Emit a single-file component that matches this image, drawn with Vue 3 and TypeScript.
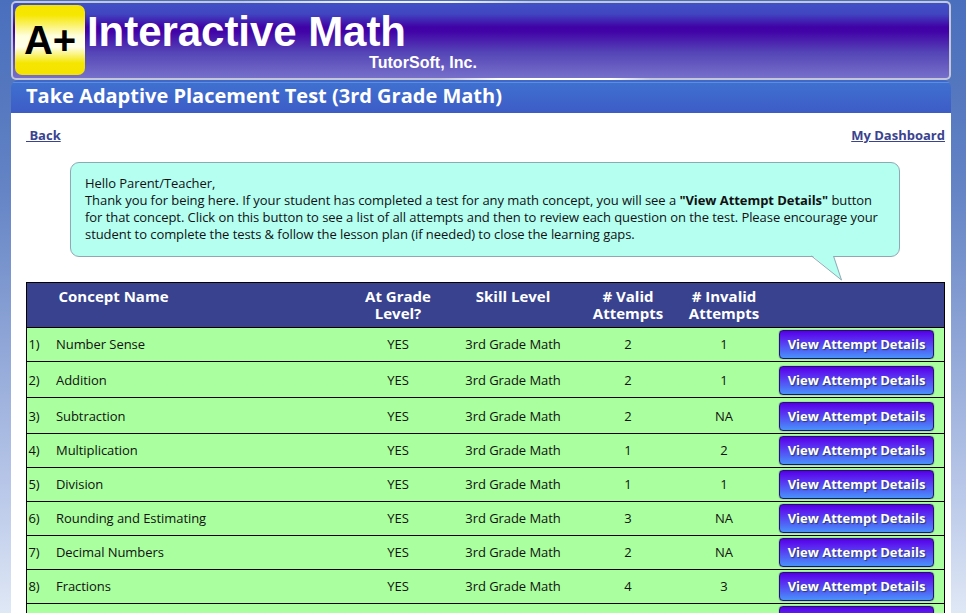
<script setup lang="ts">
interface Row {
  name: string
  valid: string
  invalid: string
  tall?: boolean
}

const rows: Row[] = [
  { name: 'Number Sense', valid: '2', invalid: '1' },
  { name: 'Addition', valid: '2', invalid: '1', tall: true },
  { name: 'Subtraction', valid: '2', invalid: 'NA', tall: true },
  { name: 'Multiplication', valid: '1', invalid: '2' },
  { name: 'Division', valid: '1', invalid: '1' },
  { name: 'Rounding and Estimating', valid: '3', invalid: 'NA' },
  { name: 'Decimal Numbers', valid: '2', invalid: 'NA' },
  { name: 'Fractions', valid: '4', invalid: '3' },
]
</script>

<template>
  <div class="page">
    <div class="container">
      <header class="banner">
        <div class="logo">A+</div>
        <div class="brand">
          <div class="brand-name">Interactive Math</div>
          <div class="brand-sub">TutorSoft, Inc.</div>
        </div>
      </header>
      <h1 class="title">Take Adaptive Placement Test (3rd Grade Math)</h1>
      <main class="content">
        <nav class="links">
          <a href="#">&nbsp;Back</a>
          <a href="#">My Dashboard</a>
        </nav>
        <section class="bubble">
          Hello Parent/Teacher,<br />
          Thank you for being here. If your student has completed a test for any math concept, you will see a <b>"View Attempt Details"</b> button<br />
          for that concept. Click on this button to see a list of all attempts and then to review each question on the test. Please encourage your<br />
          student to complete the tests &amp; follow the lesson plan (if needed) to close the learning gaps.
          <svg class="tail" width="34" height="26" viewBox="0 0 34 26">
            <path d="M0.5 0 L30.5 25 L22.5 0 Z" fill="#b5fff1" />
            <path d="M0.5 1 L30.5 25 L22.5 1" fill="none" stroke="#8fa9b4" stroke-width="1" />
          </svg>
        </section>
        <div class="table">
          <div class="row head">
            <span></span>
            <span class="name">Concept Name</span>
            <span>At Grade Level?</span>
            <span>Skill Level</span>
            <span class="attempts"># Valid Attempts</span>
            <span class="attempts"># Invalid Attempts</span>
            <span></span>
          </div>
          <div v-for="(row, i) in rows" :key="row.name" class="row" :class="{ tall: row.tall }">
            <span class="num">{{ i + 1 }})</span>
            <span class="name">{{ row.name }}</span>
            <span>YES</span>
            <span>3rd Grade Math</span>
            <span>{{ row.valid }}</span>
            <span>{{ row.invalid }}</span>
            <button type="button">View Attempt Details</button>
          </div>
          <div class="row last">
            <button type="button"></button>
          </div>
        </div>
      </main>
    </div>
  </div>
</template>

<style>
body {
  margin: 0;
  overflow: hidden;
}
</style>

<style scoped>
.page {
  box-sizing: border-box;
  height: 613px;
  overflow: hidden;
  padding: 1px 0 0 11px;
  background: linear-gradient(#4a6fbd 0, #5578bf 100px, #6484c5 190px, #8ea5d6 340px, #bccaea 500px, #dfe8f5 613px);
  font-family: 'Open Sans', sans-serif;
  font-size: 13px;
  line-height: 17px;
  color: #111;
}
.container {
  width: 940px;
}
.banner {
  box-sizing: border-box;
  display: flex;
  height: 79px;
  border: 2px solid transparent;
  border-radius: 5px;
  padding: 2px;
  background:
    linear-gradient(#3f51c7 0, #4145c0 11px, #4002a6 24px, #4204a7 29px, #5444b6 49px, #7770ca 75px) padding-box,
    linear-gradient(90deg, #c3c7d8 230px, #f0f0fa 350px, #f0f0fa 440px, #c3c7d8 520px) top / 100% 2px no-repeat border-box,
    linear-gradient(90deg, #c3c7d8 430px, #fff 490px, #fff 600px, #c3c7d8 640px) border-box;
  font-family: 'Liberation Sans', sans-serif;
  font-weight: bold;
  color: #fff;
}
.logo {
  width: 70px;
  height: 70px;
  border-radius: 7px;
  background: linear-gradient(#f5e400 0, #f6e700 10px, #ffffdf 31px, #ffffeb 42px, #f5e600 58px, #f4e200 70px);
  color: #000;
  font-size: 40px;
  line-height: 71px;
  text-align: center;
}
.brand {
  display: flex;
  flex-direction: column;
  width: 392px;
}
.brand-name {
  padding: 3px 0 0 2px;
  font-size: 42px;
  line-height: 47px;
  letter-spacing: -0.05px;
  white-space: nowrap;
}
.brand-sub {
  font-size: 16px;
  line-height: 16px;
  letter-spacing: 0.05px;
  text-align: right;
}
.title {
  box-sizing: border-box;
  height: 33px;
  margin: 0;
  border-radius: 8px 8px 0 0;
  padding: 2px 0 0 15px;
  background: linear-gradient(#3f68c8 2px, #5b8de2 2px, #5b8de2 3px, #3f70d0 3px, #3d5cc6);
  color: #fff;
  font-size: 20px;
  line-height: 27px;
}
.content {
  height: 500px;
  box-sizing: border-box;
  overflow: hidden;
  padding: 14px 6px 0 15px;
  background: #fff;
}
.links {
  display: flex;
  justify-content: space-between;
}
.links a {
  color: #39438f;
  font-weight: 700;
}
.bubble {
  position: relative;
  box-sizing: border-box;
  width: 830px;
  height: 95px;
  margin: 18px 0 25px 44px;
  border: 1px solid #8fa9b4;
  border-radius: 9px;
  padding: 12px 14px;
  background: #b5fff1;
  letter-spacing: -0.06px;
  white-space: nowrap;
}
.tail {
  position: absolute;
  left: 740px;
  top: 92px;
}
.table {
  box-sizing: border-box;
  width: 919px;
  border: 1px solid #000;
  background: #aaff9e;
}
.row {
  display: grid;
  grid-template-columns: 29px 289px 106px 124px 106px 86px 179px;
  align-items: center;
  box-sizing: border-box;
  height: 34px;
  border-bottom: 1px solid #000;
  letter-spacing: -0.06px;
  text-align: center;
}
.row.tall {
  height: 36px;
  padding-top: 1px;
}
.row.last button {
  grid-column: 7;
}
.row .num {
  padding-left: 1.5px;
  text-align: left;
}
.row .name {
  text-align: left;
}
.row.head {
  align-items: start;
  height: 45px;
  padding-top: 5px;
  background: #38428e;
  color: #fff;
  font-size: 15px;
  font-weight: bold;
  letter-spacing: 0;
}
.head span:nth-child(3) {
  padding: 0 15px;
}
.head .attempts {
  padding: 0 5px;
}
.row.head .name {
  padding-left: 2.5px;
}
button {
  justify-self: center;
  box-sizing: border-box;
  width: 155px;
  height: 29px;
  border: 1px solid #25106e;
  border-radius: 4px;
  padding: 0;
  background: linear-gradient(#5500e8, #5b20ef 25%, #4892fb);
  box-shadow: 0 0 1px #25106e;
  color: #fff;
  font: bold 13px/17px 'Open Sans', sans-serif;
  text-shadow: 1px 1px 1px #283b78;
}
</style>
